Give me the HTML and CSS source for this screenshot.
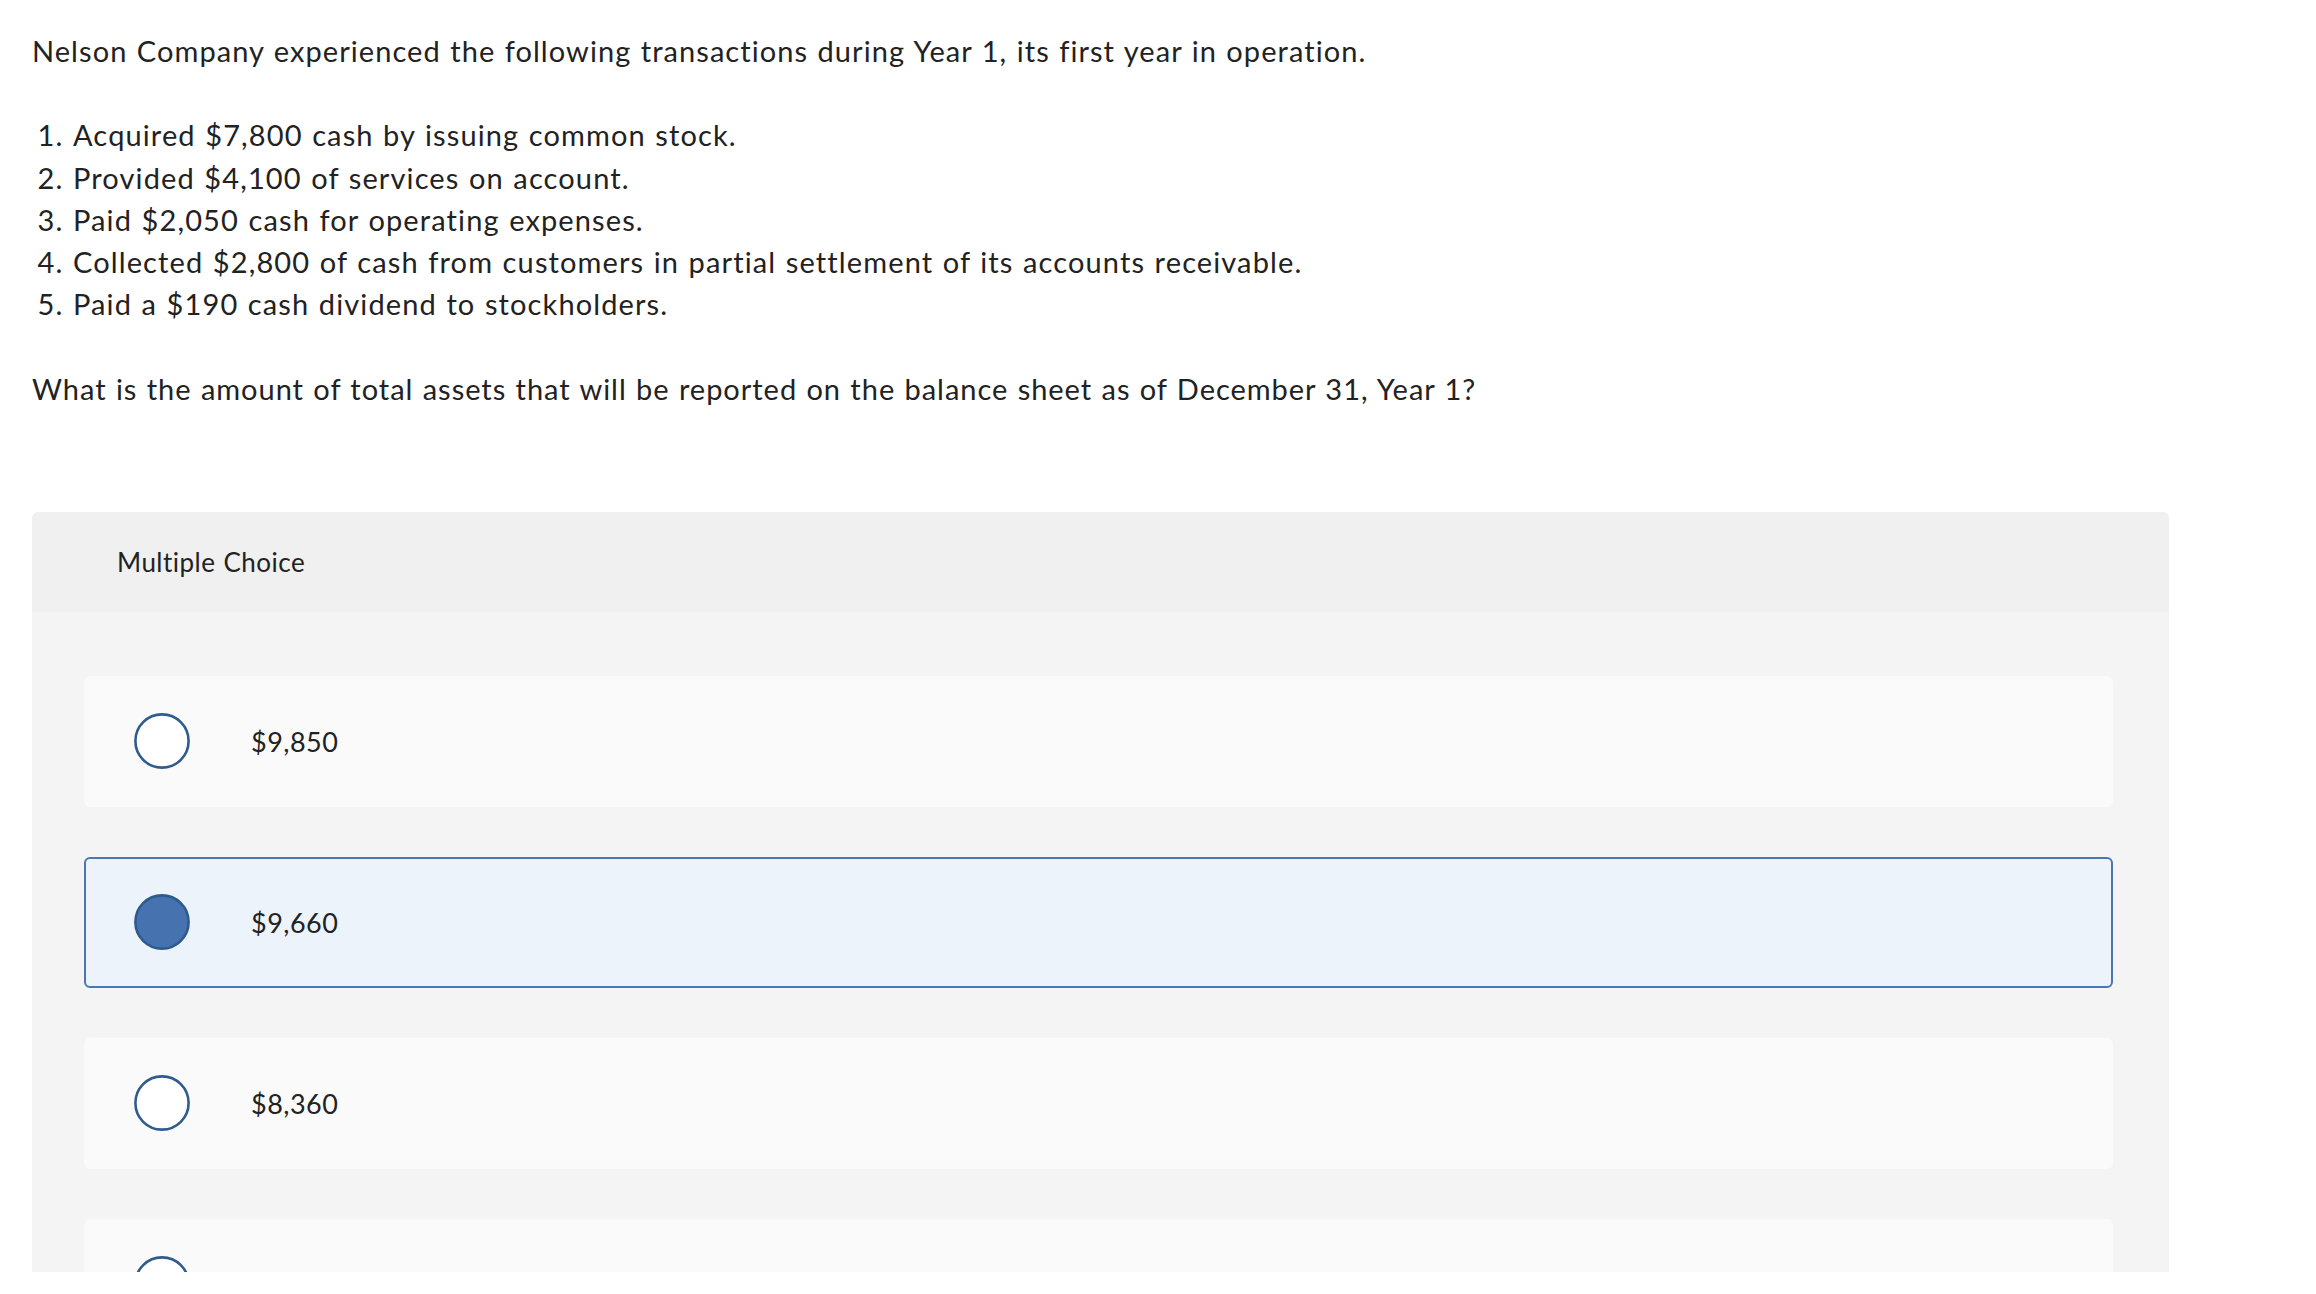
FILE: index.html
```html
<!DOCTYPE html>
<html lang="en">
<head>
<meta charset="utf-8">
<title>Multiple Choice</title>
<link rel="stylesheet" href="styles.css">
</head>
<body>
<div class="page">
  <p class="intro">Nelson Company experienced the following transactions during Year 1, its first year in operation.</p>
  <ol class="tx">
    <li>Acquired $7,800 cash by issuing common stock.</li>
    <li>Provided $4,100 of services on account.</li>
    <li>Paid $2,050 cash for operating expenses.</li>
    <li>Collected $2,800 of cash from customers in partial settlement of its accounts receivable.</li>
    <li>Paid a $190 cash dividend to stockholders.</li>
  </ol>
  <p class="question">What is the amount of total assets that will be reported on the balance sheet as of December 31, Year 1?</p>

  <section class="panel">
    <div class="panel-head">Multiple Choice</div>
    <div class="panel-body">
      <div class="choice">
        <svg class="radio" width="56" height="56" viewBox="0 0 56 56"><circle cx="28" cy="28" r="26.6" fill="#ffffff" stroke="#2f5b8f" stroke-width="2.6"/></svg>
        <span class="label">$9,850</span>
      </div>
      <div class="choice selected">
        <svg class="radio" width="56" height="56" viewBox="0 0 56 56"><circle cx="28" cy="28" r="26.6" fill="#4672b0" stroke="#2f5a8c" stroke-width="2.6"/></svg>
        <span class="label">$9,660</span>
      </div>
      <div class="choice">
        <svg class="radio" width="56" height="56" viewBox="0 0 56 56"><circle cx="28" cy="28" r="26.6" fill="#ffffff" stroke="#2f5b8f" stroke-width="2.6"/></svg>
        <span class="label">$8,360</span>
      </div>
      <div class="choice">
        <svg class="radio" width="56" height="56" viewBox="0 0 56 56"><circle cx="28" cy="28" r="26.6" fill="#ffffff" stroke="#2f5b8f" stroke-width="2.6"/></svg>
      </div>
    </div>
  </section>
</div>
</body>
</html>
```

FILE: styles.css
```css
html, body {
  margin: 0;
  padding: 0;
  background: #ffffff;
}

body {
  font-family: Lato, "Open Sans", "Liberation Sans", sans-serif;
  color: #222222;
  letter-spacing: 0.48px;
  word-spacing: 0.96px;
}

.page {
  height: 1272px;
  overflow: hidden;
  padding: 30px 0 0 32px;
  box-sizing: border-box;
}

.intro,
.question {
  margin: 0;
  font-size: 29px;
  line-height: 42.25px;
  letter-spacing: 1.06px;
}

.question {
  letter-spacing: 0.97px;
}

.tx {
  margin: 42px 0;
  padding: 0 0 0 41px;
  font-size: 29px;
  line-height: 42.25px;
  letter-spacing: 1.12px;
}

.panel {
  margin-top: 102px;
  width: 2137px;
  background: #f4f4f4;
  border-radius: 6px 6px 0 0;
}

.panel-head {
  height: 100px;
  display: flex;
  align-items: center;
  padding-left: 85px;
  background: #f0f0f0;
  border-radius: 6px 6px 0 0;
  font-size: 26px;
  color: #222222;
}

.panel-body {
  padding: 64px 56px 40px 52px;
  display: flex;
  flex-direction: column;
  gap: 50px;
}

.choice {
  box-sizing: border-box;
  height: 131px;
  display: flex;
  align-items: center;
  padding-left: 48px;
  background: #fafafa;
  border: 2px solid #fafafa;
  border-radius: 6px;
}

.choice.selected {
  background: #ecf3fb;
  border-color: #4a76b5;
}

.radio {
  flex: 0 0 auto;
  display: block;
}

.label {
  margin-left: 61px;
  font-size: 27px;
  color: #222222;
}
```
